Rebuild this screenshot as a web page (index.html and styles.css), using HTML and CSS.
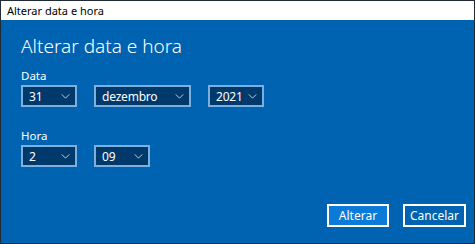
FILE: index.html
```html
<!DOCTYPE html>
<html lang="pt">

<head>
    <meta charset="UTF-8">
    <title>Alterar data e hora</title>
    <link rel="stylesheet" href="styles.css">
</head>

<body>
    <div class="window">
        <div class="titlebar">Alterar data e hora</div>
        <div class="content">
            <h1>Alterar data e hora</h1>
            <div class="label">Data</div>
            <div class="row">
                <div class="select small"><span>31</span><svg viewBox="0 0 10 6"><path d="M0.5 0.5 L5 5 L9.5 0.5" /></svg></div>
                <div class="select wide"><span>dezembro</span><svg viewBox="0 0 10 6"><path d="M0.5 0.5 L5 5 L9.5 0.5" /></svg></div>
                <div class="select small"><span>2021</span><svg viewBox="0 0 10 6"><path d="M0.5 0.5 L5 5 L9.5 0.5" /></svg></div>
            </div>
            <div class="label hora">Hora</div>
            <div class="row">
                <div class="select small"><span>2</span><svg viewBox="0 0 10 6"><path d="M0.5 0.5 L5 5 L9.5 0.5" /></svg></div>
                <div class="select small"><span>09</span><svg viewBox="0 0 10 6"><path d="M0.5 0.5 L5 5 L9.5 0.5" /></svg></div>
            </div>
            <div class="buttons">
                <button class="primary">Alterar</button>
                <button>Cancelar</button>
            </div>
        </div>
    </div>
</body>

</html>
```

FILE: styles.css
```css
html,
body {
    margin: 0;
    padding: 0;
}

body {
    font-family: "Noto Sans", "Open Sans", sans-serif;
}

.window {
    width: 475px;
    height: 244px;
    box-sizing: border-box;
    border: 1px solid #1f2a36;
    display: flex;
    flex-direction: column;
}

.titlebar {
    height: 19px;
    background: #fff;
    color: #000;
    font-size: 11px;
    line-height: 19px;
    padding-left: 6px;
}

.content {
    flex: 1;
    background: #0063b1;
    color: #fff;
    display: flex;
    flex-direction: column;
    padding: 13px 8px 16px 20px;
}

h1 {
    margin: 0;
    font-size: 19px;
    font-weight: 300;
    line-height: 26px;
}

.label {
    font-size: 11.5px;
    line-height: 16px;
    margin-top: 9px;
}

.label.hora {
    margin-top: 21px;
}

.row {
    display: flex;
    gap: 17px;
    margin-top: 1px;
}

.select {
    box-sizing: border-box;
    height: 22px;
    border: 2px solid #7eaedb;
    background: #003a6d;
    display: flex;
    align-items: center;
    padding: 0 5px 0 6px;
    font-size: 12px;
    letter-spacing: -0.2px;
}

.select.small {
    width: 56px;
}

.select.wide {
    width: 97px;
}

.select svg {
    flex: none;
    margin-left: auto;
    width: 9px;
    height: 5px;
    fill: none;
    stroke: #c9dcee;
    stroke-width: 1.1;
}

.buttons {
    margin-top: auto;
    display: flex;
    justify-content: flex-end;
    gap: 14px;
}

button {
    box-sizing: border-box;
    width: 63px;
    height: 23px;
    border: 2px solid #fff;
    background: #0063b1;
    color: #fff;
    font-family: inherit;
    font-size: 12px;
    padding: 0;
}

button.primary {
    width: 62px;
    background: #0a7bd8;
}
```
